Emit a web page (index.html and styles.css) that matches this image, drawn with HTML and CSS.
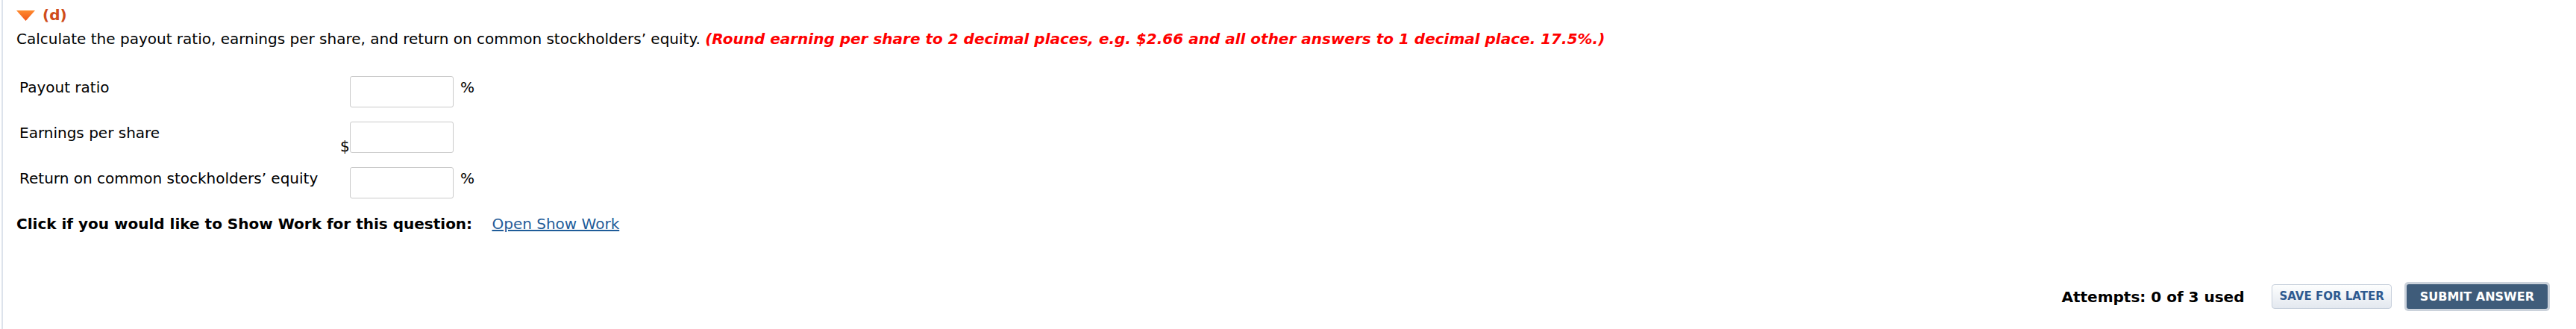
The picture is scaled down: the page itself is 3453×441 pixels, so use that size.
FILE: index.html
```html
<!DOCTYPE html>
<html lang="en">
<head>
<meta charset="utf-8">
<title>Part (d)</title>
<link rel="stylesheet" href="styles.css">
</head>
<body>
<div class="panel">
  <div class="head">
    <svg class="tri" width="25" height="14" viewBox="0 0 25 14" aria-hidden="true">
      <defs>
        <linearGradient id="tg" x1="0" y1="0" x2="0" y2="1">
          <stop offset="0" stop-color="#ff8a2e"/>
          <stop offset="1" stop-color="#f0561a"/>
        </linearGradient>
      </defs>
      <polygon points="0,0 25,0 12.5,14" fill="url(#tg)"/>
    </svg>
    <span class="part">(d)</span>
  </div>
  <p class="prompt">Calculate the payout ratio, earnings per share, and return on common stockholders’ equity. <em class="hint">(Round earning per share to 2 decimal places, e.g. $2.66 and all other answers to 1 decimal place. 17.5%.)</em></p>
  <div class="rows">
    <div class="row">
      <span class="label">Payout ratio</span>
      <span class="prefix"></span>
      <input class="field" type="text">
      <span class="unit">%</span>
    </div>
    <div class="row">
      <span class="label">Earnings per share</span>
      <span class="prefix">$</span>
      <input class="field" type="text">
    </div>
    <div class="row">
      <span class="label">Return on common stockholders’ equity</span>
      <span class="prefix"></span>
      <input class="field" type="text">
      <span class="unit">%</span>
    </div>
  </div>
  <p class="showwork"><b>Click if you would like to Show Work for this question:</b> <a href="#" class="link">Open Show Work</a></p>
  <div class="footer">
    <span class="attempts">Attempts: 0 of 3 used</span>
    <button class="save" type="button">SAVE FOR LATER</button>
    <button class="submit" type="button"><span class="submit-inner">SUBMIT ANSWER</span></button>
  </div>
</div>
</body>
</html>
```
FILE: styles.css
```css
html, body {
  margin: 0;
  padding: 0;
  background: #ffffff;
}
body {
  font-family: "DejaVu Sans", Verdana, sans-serif;
  font-size: 20px;
  line-height: 24px;
  color: #000000;
}
.panel {
  margin-left: 2px;
  border-left: 2px solid #dde3ec;
  padding: 8px 35px 0 18px;
  height: 441px;
  box-sizing: border-box;
}
.head {
  display: flex;
  align-items: center;
  height: 24px;
  gap: 10px;
}
.tri {
  display: block;
  margin-top: 2px;
}
.part {
  font-weight: bold;
  color: #cf4d1b;
}
.prompt {
  margin: 8px 0 0;
  white-space: nowrap;
}
.hint {
  font-weight: bold;
  font-style: italic;
  color: #ff0000;
}
.rows {
  margin-top: 38px;
  display: flex;
  flex-direction: column;
  gap: 19px;
  padding-left: 4px;
}
.row {
  display: flex;
  align-items: flex-start;
  height: 42px;
}
.label {
  width: 430px;
  margin-top: 3px;
}
.prefix {
  width: 13px;
  align-self: flex-end;
  margin-bottom: -3px;
}
.field {
  width: 139px;
  height: 42px;
  box-sizing: border-box;
  margin: 0;
  padding: 0 6px;
  border: 1px solid #cacaca;
  border-radius: 3px;
  background: #ffffff;
  font: inherit;
}
.unit {
  margin-left: 9px;
  margin-top: 3px;
}
.showwork {
  margin: 22px 0 0;
  white-space: nowrap;
}
.link {
  margin-left: 20px;
  color: #1f5c99;
  text-decoration: underline;
}
.footer {
  margin-top: 66px;
  display: flex;
  justify-content: flex-end;
  align-items: center;
  height: 39px;
}
.attempts {
  font-weight: bold;
  margin-right: 37px;
}
.save {
  height: 33px;
  margin: 0 17px 0 0;
  padding: 0 9px;
  border: 1px solid #c6cfdb;
  border-radius: 4px;
  background: linear-gradient(#fdfefe, #e3e8ef);
  color: #2e5a90;
  font-family: "DejaVu Sans", Verdana, sans-serif;
  font-weight: bold;
  font-size: 15px;
  line-height: 31px;
  cursor: pointer;
}
.submit {
  height: 39px;
  margin: 0;
  padding: 3px;
  border: 0;
  border-radius: 5px;
  background: #cbd2db;
  cursor: pointer;
}
.submit-inner {
  display: block;
  height: 33px;
  padding: 0 18px;
  border-radius: 3px;
  background: #3f5c7a;
  color: #ffffff;
  font-family: "DejaVu Sans", Verdana, sans-serif;
  font-weight: bold;
  font-size: 16px;
  line-height: 33px;
}
```
